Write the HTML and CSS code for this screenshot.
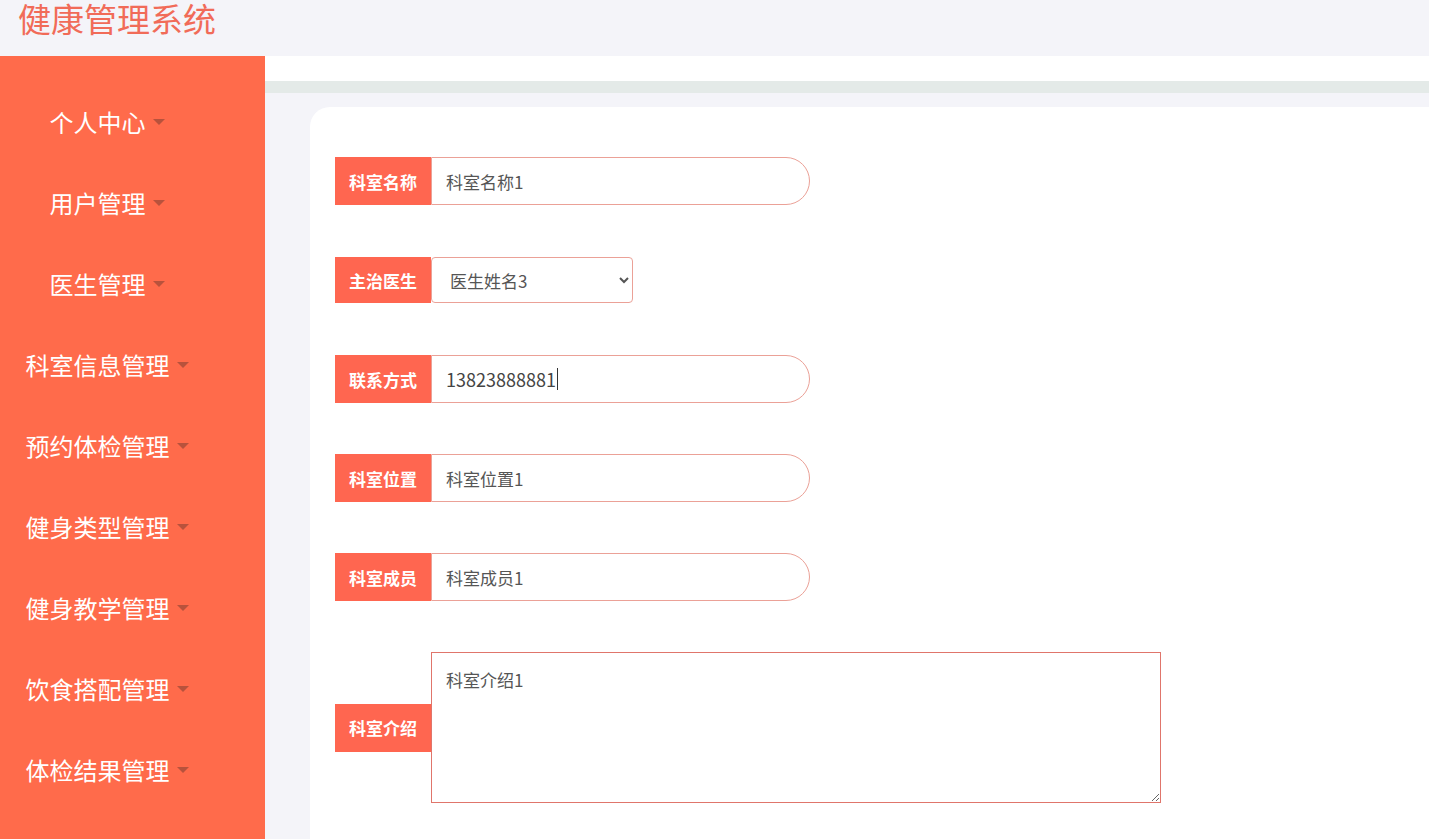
FILE: index.html
```html
<!DOCTYPE html>
<html lang="zh-CN">
<head>
<meta charset="utf-8">
<title>健康管理系统</title>
<link rel="stylesheet" href="styles.css">
</head>
<body>
<header class="topbar">
  <h1 class="brand">健康管理系统</h1>
</header>
<div class="layout">
  <nav class="sidebar">
    <ul class="menu">
      <li class="menu-item">个人中心<span class="caret"></span></li>
      <li class="menu-item">用户管理<span class="caret"></span></li>
      <li class="menu-item">医生管理<span class="caret"></span></li>
      <li class="menu-item">科室信息管理<span class="caret"></span></li>
      <li class="menu-item">预约体检管理<span class="caret"></span></li>
      <li class="menu-item">健身类型管理<span class="caret"></span></li>
      <li class="menu-item">健身教学管理<span class="caret"></span></li>
      <li class="menu-item">饮食搭配管理<span class="caret"></span></li>
      <li class="menu-item">体检结果管理<span class="caret"></span></li>
    </ul>
  </nav>
  <main class="main">
    <div class="strip-white"></div>
    <div class="strip-grey"></div>
    <section class="content">
      <div class="card">
        <form class="form">
          <div class="row">
            <label class="label">科室名称</label>
            <input class="field" type="text" value="科室名称1">
          </div>
          <div class="row">
            <label class="label label-sm">主治医生</label>
            <select class="select">
              <option>医生姓名1</option>
              <option>医生姓名2</option>
              <option selected>医生姓名3</option>
            </select>
          </div>
          <div class="row">
            <label class="label">联系方式</label>
            <div class="field field-box">13823888881<span class="caret-line"></span></div>
          </div>
          <div class="row">
            <label class="label">科室位置</label>
            <input class="field" type="text" value="科室位置1">
          </div>
          <div class="row">
            <label class="label">科室成员</label>
            <input class="field" type="text" value="科室成员1">
          </div>
          <div class="row row-area">
            <label class="label">科室介绍</label>
            <textarea class="area">科室介绍1</textarea>
          </div>
        </form>
      </div>
    </section>
  </main>
</div>
</body>
</html>
```

FILE: styles.css
```css
* { box-sizing: border-box; }
html, body { margin: 0; padding: 0; height: 100%; overflow: hidden; }
body {
  font-family: "Noto Sans CJK SC", "Noto Sans", sans-serif;
  background: #f4f4f9;
}
.topbar {
  height: 56px;
  background: #f4f4f9;
  padding-left: 18px;
}
.brand {
  margin: 0;
  font-size: 33px;
  font-weight: 400;
  line-height: 36px;
  color: #f16b58;
}
.layout {
  display: flex;
  height: calc(100% - 56px);
}
.sidebar {
  width: 265px;
  flex: none;
  background: #ff6b4b;
}
.menu {
  list-style: none;
  margin: 0;
  padding: 25px 51px 0 0;
}
.menu-item {
  height: 81px;
  line-height: 81px;
  text-align: center;
  color: #fff;
  font-size: 24px;
  white-space: nowrap;
}
.caret {
  display: inline-block;
  width: 0;
  height: 0;
  margin-left: 7px;
  vertical-align: middle;
  border-left: 6px solid transparent;
  border-right: 6px solid transparent;
  border-top: 6px solid #b8523c;
  position: relative;
  top: -3px;
}
.main {
  flex: 1;
  display: flex;
  flex-direction: column;
  min-width: 0;
}
.strip-white { height: 25px; background: #fff; }
.strip-grey { height: 12px; background: #e4eae8; }
.content {
  flex: 1;
  padding: 14px 0 0 45px;
}
.card {
  height: 100%;
  background: #fff;
  border-radius: 20px 0 0 0;
  padding: 50px 0 0 25px;
}
.form {
  display: flex;
  flex-direction: column;
  gap: 51px;
}
.row {
  display: flex;
  align-items: center;
  height: 48px;
}
.row-area { height: 151px; }
.label {
  width: 96px;
  height: 48px;
  flex: none;
  background: #ff6650;
  color: #fff;
  font-weight: 700;
  font-size: 17px;
  display: flex;
  align-items: center;
  justify-content: center;
}
.label-sm { height: 46px; }
.field {
  width: 379px;
  height: 48px;
  border: 1px solid #eba197;
  border-radius: 0 24px 24px 0;
  padding: 0 14px;
  font-family: inherit;
  font-size: 17px;
  color: #555;
  background: #fff;
  outline: none;
}
.field-box {
  display: flex;
  align-items: center;
  font-size: 18px;
  color: #444;
}
.caret-line {
  display: inline-block;
  width: 1px;
  height: 22px;
  background: #333;
  margin-left: 1px;
}
.select {
  width: 202px;
  height: 46px;
  border: 1px solid #eba197;
  border-radius: 4px;
  padding: 0 14px;
  font-family: inherit;
  font-size: 17px;
  color: #555;
  background: #fff;
}
.area {
  width: 730px;
  height: 151px;
  border: 1px solid #e0756b;
  border-radius: 0;
  padding: 14px 14px;
  font-family: inherit;
  font-size: 17px;
  color: #555;
  resize: both;
  outline: none;
}
```
